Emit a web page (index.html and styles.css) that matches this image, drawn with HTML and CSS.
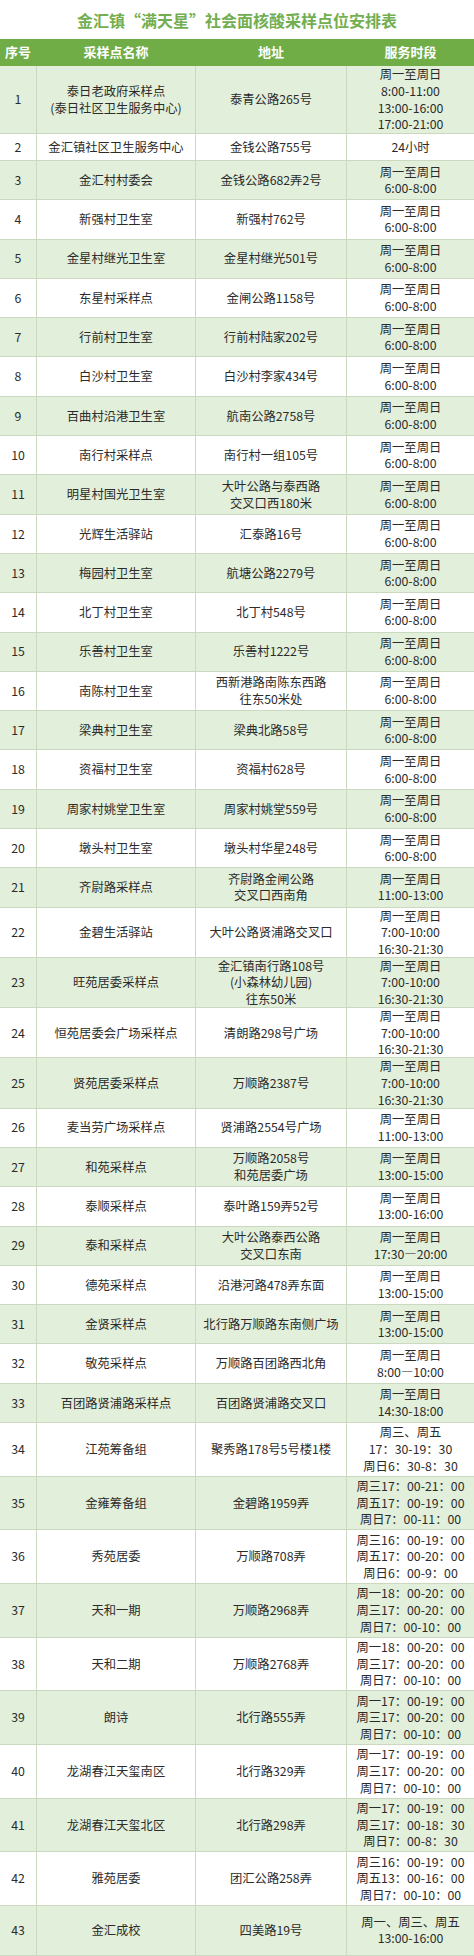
FILE: index.html
```html
<!DOCTYPE html>
<html lang="zh-CN">
<head>
<meta charset="utf-8">
<title>金汇镇“满天星”社会面核酸采样点位安排表</title>
<link rel="stylesheet" href="styles.css">
</head>
<body>
<h1 class="title">金汇镇“满天星”社会面核酸采样点位安排表</h1>
<div class="sheet" role="table">
<div class="row head" role="row"><div class="cell">序号</div><div class="cell">采样点名称</div><div class="cell">地址</div><div class="cell">服务时段</div></div>
<div class="row alt h4" role="row"><div class="cell">1</div><div class="cell">泰日老政府采样点<br>(泰日社区卫生服务中心)</div><div class="cell">泰青公路265号</div><div class="cell">周一至周日<br>8:00-11:00<br>13:00-16:00<br>17:00-21:00</div></div>
<div class="row h1" role="row"><div class="cell">2</div><div class="cell">金汇镇社区卫生服务中心</div><div class="cell">金钱公路755号</div><div class="cell">24小时</div></div>
<div class="row alt h2" role="row"><div class="cell">3</div><div class="cell">金汇村村委会</div><div class="cell">金钱公路682弄2号</div><div class="cell">周一至周日<br>6:00-8:00</div></div>
<div class="row h2" role="row"><div class="cell">4</div><div class="cell">新强村卫生室</div><div class="cell">新强村762号</div><div class="cell">周一至周日<br>6:00-8:00</div></div>
<div class="row alt h2" role="row"><div class="cell">5</div><div class="cell">金星村继光卫生室</div><div class="cell">金星村继光501号</div><div class="cell">周一至周日<br>6:00-8:00</div></div>
<div class="row h2" role="row"><div class="cell">6</div><div class="cell">东星村采样点</div><div class="cell">金闸公路1158号</div><div class="cell">周一至周日<br>6:00-8:00</div></div>
<div class="row alt h2" role="row"><div class="cell">7</div><div class="cell">行前村卫生室</div><div class="cell">行前村陆家202号</div><div class="cell">周一至周日<br>6:00-8:00</div></div>
<div class="row h2" role="row"><div class="cell">8</div><div class="cell">白沙村卫生室</div><div class="cell">白沙村李家434号</div><div class="cell">周一至周日<br>6:00-8:00</div></div>
<div class="row alt h2" role="row"><div class="cell">9</div><div class="cell">百曲村沿港卫生室</div><div class="cell">航南公路2758号</div><div class="cell">周一至周日<br>6:00-8:00</div></div>
<div class="row h2" role="row"><div class="cell">10</div><div class="cell">南行村采样点</div><div class="cell">南行村一组105号</div><div class="cell">周一至周日<br>6:00-8:00</div></div>
<div class="row alt h2" role="row"><div class="cell">11</div><div class="cell">明星村国光卫生室</div><div class="cell">大叶公路与泰西路<br>交叉口西180米</div><div class="cell">周一至周日<br>6:00-8:00</div></div>
<div class="row h2" role="row"><div class="cell">12</div><div class="cell">光辉生活驿站</div><div class="cell">汇泰路16号</div><div class="cell">周一至周日<br>6:00-8:00</div></div>
<div class="row alt h2" role="row"><div class="cell">13</div><div class="cell">梅园村卫生室</div><div class="cell">航塘公路2279号</div><div class="cell">周一至周日<br>6:00-8:00</div></div>
<div class="row h2" role="row"><div class="cell">14</div><div class="cell">北丁村卫生室</div><div class="cell">北丁村548号</div><div class="cell">周一至周日<br>6:00-8:00</div></div>
<div class="row alt h2" role="row"><div class="cell">15</div><div class="cell">乐善村卫生室</div><div class="cell">乐善村1222号</div><div class="cell">周一至周日<br>6:00-8:00</div></div>
<div class="row h2" role="row"><div class="cell">16</div><div class="cell">南陈村卫生室</div><div class="cell">西新港路南陈东西路<br>往东50米处</div><div class="cell">周一至周日<br>6:00-8:00</div></div>
<div class="row alt h2" role="row"><div class="cell">17</div><div class="cell">梁典村卫生室</div><div class="cell">梁典北路58号</div><div class="cell">周一至周日<br>6:00-8:00</div></div>
<div class="row h2" role="row"><div class="cell">18</div><div class="cell">资福村卫生室</div><div class="cell">资福村628号</div><div class="cell">周一至周日<br>6:00-8:00</div></div>
<div class="row alt h2" role="row"><div class="cell">19</div><div class="cell">周家村姚堂卫生室</div><div class="cell">周家村姚堂559号</div><div class="cell">周一至周日<br>6:00-8:00</div></div>
<div class="row h2" role="row"><div class="cell">20</div><div class="cell">墩头村卫生室</div><div class="cell">墩头村华星248号</div><div class="cell">周一至周日<br>6:00-8:00</div></div>
<div class="row alt h2" role="row"><div class="cell">21</div><div class="cell">齐尉路采样点</div><div class="cell">齐尉路金闸公路<br>交叉口西南角</div><div class="cell">周一至周日<br>11:00-13:00</div></div>
<div class="row h3" role="row"><div class="cell">22</div><div class="cell">金碧生活驿站</div><div class="cell">大叶公路贤浦路交叉口</div><div class="cell">周一至周日<br>7:00-10:00<br>16:30-21:30</div></div>
<div class="row alt h3" role="row"><div class="cell">23</div><div class="cell">旺苑居委采样点</div><div class="cell">金汇镇南行路108号<br>(小森林幼儿园)<br>往东50米</div><div class="cell">周一至周日<br>7:00-10:00<br>16:30-21:30</div></div>
<div class="row h3" role="row"><div class="cell">24</div><div class="cell">恒苑居委会广场采样点</div><div class="cell">清朗路298号广场</div><div class="cell">周一至周日<br>7:00-10:00<br>16:30-21:30</div></div>
<div class="row alt h3" role="row"><div class="cell">25</div><div class="cell">贤苑居委采样点</div><div class="cell">万顺路2387号</div><div class="cell">周一至周日<br>7:00-10:00<br>16:30-21:30</div></div>
<div class="row h2" role="row"><div class="cell">26</div><div class="cell">麦当劳广场采样点</div><div class="cell">贤浦路2554号广场</div><div class="cell">周一至周日<br>11:00-13:00</div></div>
<div class="row alt h2" role="row"><div class="cell">27</div><div class="cell">和苑采样点</div><div class="cell">万顺路2058号<br>和苑居委广场</div><div class="cell">周一至周日<br>13:00-15:00</div></div>
<div class="row h2" role="row"><div class="cell">28</div><div class="cell">泰顺采样点</div><div class="cell">泰叶路159弄52号</div><div class="cell">周一至周日<br>13:00-16:00</div></div>
<div class="row alt h2" role="row"><div class="cell">29</div><div class="cell">泰和采样点</div><div class="cell">大叶公路泰西公路<br>交叉口东南</div><div class="cell">周一至周日<br>17:30—20:00</div></div>
<div class="row h2" role="row"><div class="cell">30</div><div class="cell">德苑采样点</div><div class="cell">沿港河路478弄东面</div><div class="cell">周一至周日<br>13:00-15:00</div></div>
<div class="row alt h2" role="row"><div class="cell">31</div><div class="cell">金贤采样点</div><div class="cell">北行路万顺路东南侧广场</div><div class="cell">周一至周日<br>13:00-15:00</div></div>
<div class="row h2" role="row"><div class="cell">32</div><div class="cell">敬苑采样点</div><div class="cell">万顺路百团路西北角</div><div class="cell">周一至周日<br>8:00—10:00</div></div>
<div class="row alt h2" role="row"><div class="cell">33</div><div class="cell">百团路贤浦路采样点</div><div class="cell">百团路贤浦路交叉口</div><div class="cell">周一至周日<br>14:30-18:00</div></div>
<div class="row h3b" role="row"><div class="cell">34</div><div class="cell">江苑筹备组</div><div class="cell">聚秀路178号5号楼1楼</div><div class="cell">周三、周五<br>17：30-19：30<br>周日6：30-8：30</div></div>
<div class="row alt h3b" role="row"><div class="cell">35</div><div class="cell">金雍筹备组</div><div class="cell">金碧路1959弄</div><div class="cell">周三17：00-21：00<br>周五17：00-19：00<br>周日7：00-11：00</div></div>
<div class="row h3b" role="row"><div class="cell">36</div><div class="cell">秀苑居委</div><div class="cell">万顺路708弄</div><div class="cell">周三16：00-19：00<br>周五17：00-20：00<br>周日6：00-9：00</div></div>
<div class="row alt h3b" role="row"><div class="cell">37</div><div class="cell">天和一期</div><div class="cell">万顺路2968弄</div><div class="cell">周一18：00-20：00<br>周三17：00-20：00<br>周日7：00-10：00</div></div>
<div class="row h3b" role="row"><div class="cell">38</div><div class="cell">天和二期</div><div class="cell">万顺路2768弄</div><div class="cell">周一18：00-20：00<br>周三17：00-20：00<br>周日7：00-10：00</div></div>
<div class="row alt h3b" role="row"><div class="cell">39</div><div class="cell">朗诗</div><div class="cell">北行路555弄</div><div class="cell">周一17：00-19：00<br>周三17：00-20：00<br>周日7：00-10：00</div></div>
<div class="row h3b" role="row"><div class="cell">40</div><div class="cell">龙湖春江天玺南区</div><div class="cell">北行路329弄</div><div class="cell">周一17：00-19：00<br>周三17：00-20：00<br>周日7：00-10：00</div></div>
<div class="row alt h3b" role="row"><div class="cell">41</div><div class="cell">龙湖春江天玺北区</div><div class="cell">北行路298弄</div><div class="cell">周一17：00-19：00<br>周三17：00-18：30<br>周日7：00-8：30</div></div>
<div class="row h3b" role="row"><div class="cell">42</div><div class="cell">雅苑居委</div><div class="cell">团汇公路258弄</div><div class="cell">周三16：00-19：00<br>周五13：00-16：00<br>周日7：00-10：00</div></div>
<div class="row alt hlast" role="row"><div class="cell">43</div><div class="cell">金汇成校</div><div class="cell">四美路19号</div><div class="cell">周一、周三、周五<br>13:00-16:00</div></div>
</div>
</body>
</html>
```

FILE: styles.css
```css
html, body {
  margin: 0;
  padding: 0;
  background: #ffffff;
}

body {
  width: 474px;
  font-family: "Noto Sans CJK SC", "Noto Sans", sans-serif;
  color: #2b2b2b;
}

.title {
  margin: 0;
  height: 39px;
  display: flex;
  align-items: center;
  justify-content: center;
  font-size: 16px;
  line-height: 20px;
  font-weight: 700;
  color: #73ae50;
}

.sheet {
  width: 474px;
  display: flex;
  flex-direction: column;
  font-size: 12.3px;
  line-height: 16.6px;
}

.row {
  box-sizing: border-box;
  display: grid;
  grid-template-columns: 37px 159px 151px 127px;
  border-bottom: 1px solid #cad9c0;
  overflow: hidden;
  flex: none;
}

.cell {
  box-sizing: border-box;
  display: flex;
  flex-direction: column;
  align-items: center;
  justify-content: center;
  text-align: center;
  white-space: nowrap;
  border-right: 1px solid #cad9c0;
  min-width: 0;
}

.cell:last-child {
  border-right: none;
}

.row.head {
  height: 27px;
  background: #70ad47;
  color: #ffffff;
  font-weight: 700;
  font-size: 13px;
  border-bottom-color: #70ad47;
}

.row.head .cell {
  border-right-color: #70ad47;
}

.row.alt {
  background: #e2efda;
}

.h4 { height: 68px; }
.h1 { height: 27px; }
.h2 { height: 39.3px; }
.h3 { height: 50.25px; }
.h3b { height: 53.67px; }
.hlast { height: 50px; }
```
